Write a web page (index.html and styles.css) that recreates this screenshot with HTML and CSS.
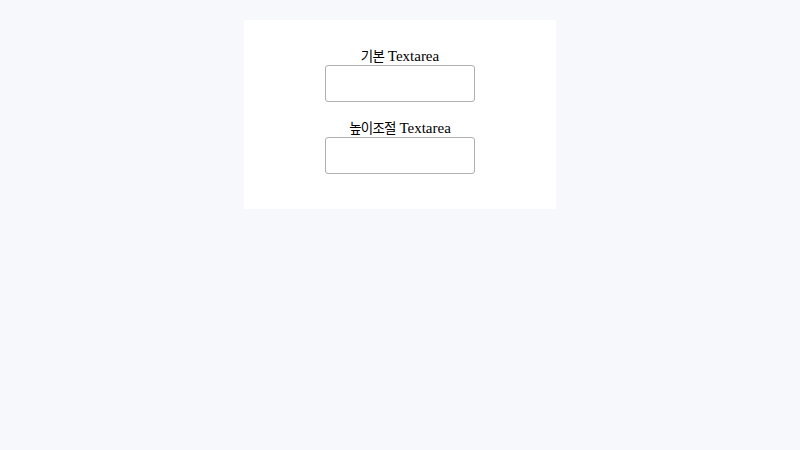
FILE: index.html
```html
<!DOCTYPE html>
<html lang="ko">
<head>
    <meta charset="UTF-8">
    <meta name="viewport" content="width=device-width, initial-scale=1.0">
    <title>Textarea</title>
    <link rel="stylesheet" href="styles.css">
</head>
<body>

    <div class="card">
        <!-- 기본 -->
        <div class="field">
            <label for="basic"><span class="ko">기본</span> Textarea</label>
            <textarea id="basic"></textarea>
        </div>

        <!-- 높이조절 -->
        <div class="field">
            <label for="auto"><span class="ko">높이조절</span> Textarea</label>
            <textarea id="auto"></textarea>
        </div>
    </div>

</body>
</html>
```

FILE: styles.css
```css
/* Reset and base styles */
* {
    box-sizing: border-box;
    margin: 0;
    padding: 0;
}
body {
    font-family: "Liberation Serif", "Noto Sans CJK KR", serif;
    background: #f7f8fc;
    color: #000;
    padding-top: 20px;
}
/* Card */
.card {
    width: 312px;
    margin: 0 auto;
    background: #ffffff;
    padding: 26px 0 35px;
    display: flex;
    flex-direction: column;
    align-items: center;
    gap: 16px;
}
.field {
    display: flex;
    flex-direction: column;
    align-items: center;
}
label {
    font-size: 15px;
    line-height: 18px;
    padding-top: 1px;
}
label .ko {
    font-family: "Noto Sans CJK KR", sans-serif;
    font-size: 13.5px;
    line-height: 1;
    letter-spacing: -0.8px;
}
textarea {
    width: 150px;
    height: 37px;
    border: 1px solid #b0b0b0;
    border-radius: 3px;
    resize: none;
    font-family: "Liberation Mono", monospace;
    font-size: 13px;
    padding: 2px;
}
```
